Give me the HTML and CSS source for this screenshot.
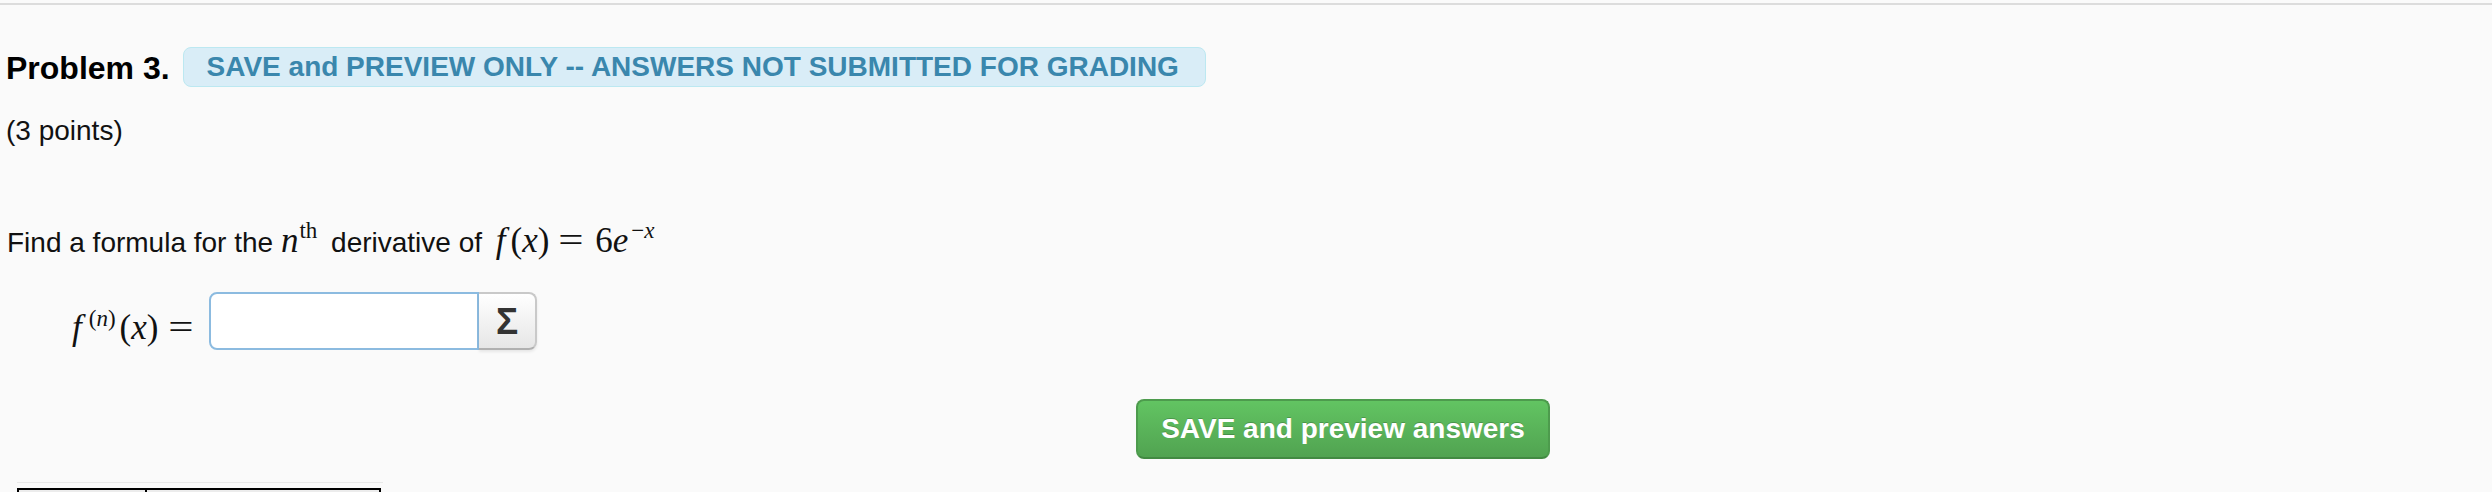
FILE: index.html
```html
<!DOCTYPE html>
<html>
<head>
<meta charset="utf-8">
<title>Problem 3</title>
<link rel="stylesheet" href="styles.css">
</head>
<body>
<div class="topline"></div>
<main class="problem">
  <div class="header">
    <h3 class="title">Problem 3.</h3>
    <span class="badge">SAVE and PREVIEW ONLY -- ANSWERS NOT SUBMITTED FOR GRADING</span>
  </div>
  <p class="points">(3 points)</p>
  <p class="question">Find a formula for the <span class="math mn"><i>n</i><sup class="msup">th</sup></span> derivative of <span class="math mf"><i class="fi">f</i><span class="paren">(</span><i>x</i><span class="paren">)</span><span class="eq">=</span>6<i>e</i><sup class="msup esup">−<i>x</i></sup></span></p>
  <div class="answer-row">
    <span class="math label"><i class="fi">f</i><sup class="msup lsup">(<i>n</i>)</sup><span class="paren">(</span><i>x</i><span class="paren">)</span><span class="eq">=</span></span>
    <div class="input-group">
      <input class="answer" type="text" aria-label="answer">
      <button class="sigma" type="button">Σ</button>
    </div>
  </div>
  <div class="submit-row">
    <button class="btn-success" type="button">SAVE and preview answers</button>
  </div>
  <div class="results">
    <table class="results-table">
      <tr><td class="c1"></td><td class="c2"></td></tr>
    </table>
  </div>
</main>
</body>
</html>
```
FILE: styles.css
```css
html, body {
  margin: 0;
  background: #fafafa;
}
body {
  font-family: "Liberation Sans", Arial, Helvetica, sans-serif;
  color: #111;
}
.topline {
  height: 2px;
  background: #dcdcdc;
  margin-top: 3px;
}
.problem {
  padding-left: 6px;
}
.header {
  display: flex;
  align-items: center;
  margin-top: 42px;
  height: 40px;
}
.title {
  margin: 0 13px 0 0;
  padding-top: 2px;
  font-size: 32px;
  font-weight: bold;
  line-height: 1;
  color: #000;
}
.badge {
  box-sizing: border-box;
  height: 40px;
  line-height: 38px;
  padding: 0 26px 0 23px;
  background: #d9edf7;
  border: 1px solid #bce8f1;
  border-radius: 8px;
  color: #3a87ad;
  font-size: 28px;
  font-weight: bold;
  white-space: nowrap;
}
.points {
  margin: 28px 0 0;
  font-size: 28px;
  line-height: 32px;
}
.question {
  margin: 76px 0 0;
  padding-left: 1px;
  font-size: 28px;
  line-height: 40px;
}
.math {
  font-family: "Liberation Serif", "Times New Roman", serif;
  font-size: 35px;
  line-height: 0;
  color: #111;
}
.math i {
  font-style: italic;
}
.mn {
  margin-right: 6px;
}
.mf {
  margin-left: 6px;
}
.fi {
  margin-right: 5px;
}
.paren {
  font-style: normal;
}
.msup {
  font-size: 23px;
  vertical-align: 14px;
  line-height: 0;
  margin-left: 1px;
}
.esup {
  margin-left: 3px;
}
.eq {
  display: inline-block;
  margin: 0 14px 0 12px;
  transform: scaleX(1.28);
}
.answer-row {
  display: flex;
  align-items: flex-start;
  margin-top: 29px;
  padding-left: 66px;
}
.label {
  box-sizing: border-box;
  width: 137px;
  margin-top: 16px;
  line-height: 40px;
  white-space: nowrap;
}
.label .fi {
  margin-right: 7px;
}
.label .eq {
  margin: 0 0 0 13px;
}
.lsup {
  vertical-align: 13px;
  margin-left: 0;
  margin-right: 4px;
}
.input-group {
  display: flex;
}
.answer {
  box-sizing: border-box;
  width: 270px;
  height: 58px;
  margin: 0;
  padding: 0 12px;
  border: 2px solid #8cbbe0;
  border-radius: 8px 0 0 8px;
  background: #fff;
  outline: none;
}
.sigma {
  box-sizing: border-box;
  width: 58px;
  height: 58px;
  margin: 0;
  padding: 0;
  border: 2px solid #c9c9c9;
  border-left: 0;
  border-bottom-color: #b0b0b0;
  border-radius: 0 8px 8px 0;
  background: linear-gradient(#ffffff, #e6e6e6);
  box-shadow: 0 2px 3px rgba(0, 0, 0, 0.08);
  font-family: "Liberation Sans", Arial, sans-serif;
  font-weight: bold;
  font-size: 37px;
  line-height: 1;
  color: #333;
}
.submit-row {
  margin-top: 49px;
  padding-left: 1130px;
}
.btn-success {
  box-sizing: border-box;
  width: 414px;
  height: 60px;
  margin: 0;
  padding: 0;
  border: 2px solid #4d9b4d;
  border-bottom-color: #428a42;
  border-radius: 8px;
  background: linear-gradient(#62c462, #51a351);
  color: #fff;
  font-family: "Liberation Sans", Arial, sans-serif;
  font-weight: bold;
  font-size: 28px;
  text-shadow: 0 -1px 0 rgba(0, 0, 0, 0.2);
}
.results {
  margin-top: 23px;
  margin-left: 11px;
  width: 366px;
  border-top: 1px solid #e8e8e8;
  padding-top: 5px;
}
.results-table {
  border-collapse: collapse;
  width: 364px;
  border: 2px solid #000;
}
.results-table td {
  border: 2px solid #000;
  height: 40px;
  background: #ececec;
  padding: 0;
}
.results-table .c1 {
  width: 126px;
}
```
